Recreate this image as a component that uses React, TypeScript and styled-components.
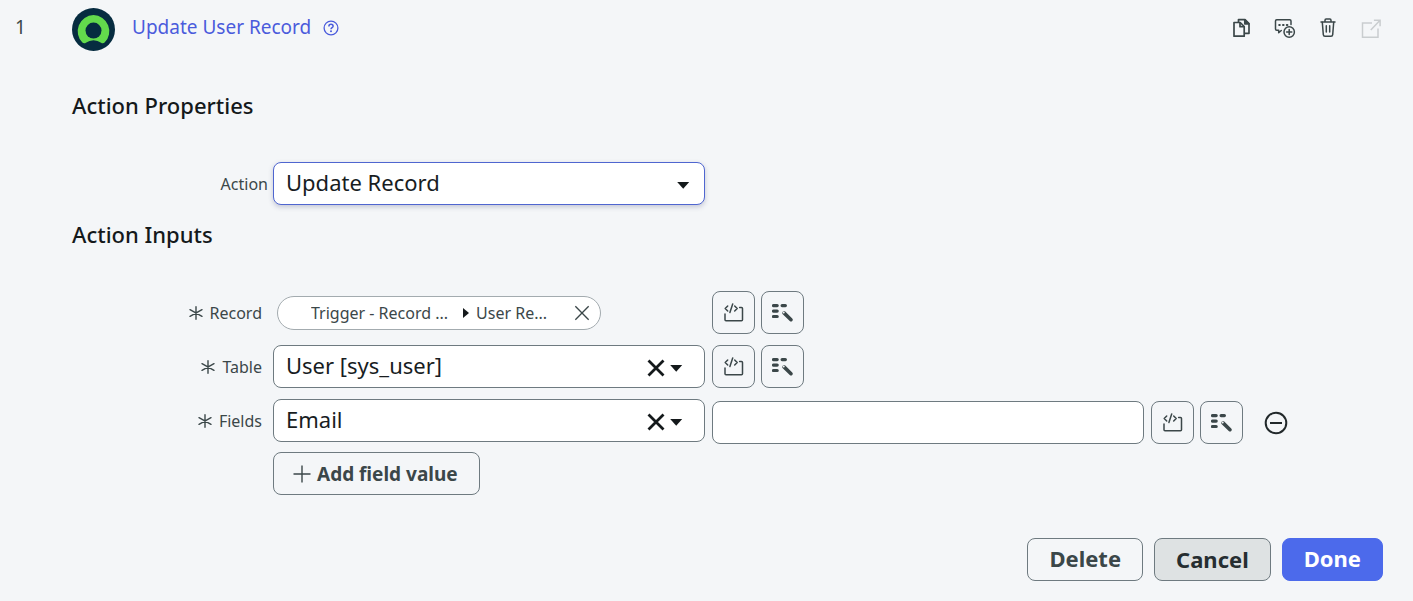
import React from 'react';
import styled, { createGlobalStyle, css } from 'styled-components';

const GlobalStyle = createGlobalStyle`
  *, *::before, *::after { box-sizing: border-box; }
  html, body { margin: 0; background: #f4f6f8; }
  body, button, select, input { font-family: 'Noto Sans', 'Open Sans', sans-serif; }
`;

const Page = styled.main`
  min-height: 100vh;
  padding: 8px 30px 20px 0;
  color: #3b4749;
  background: #f4f6f8;
`;

const Header = styled.header`
  display: flex;
  align-items: flex-start;
  height: 43px;
`;

const StepNumber = styled.span`
  flex: 0 0 72px;
  padding-left: 15px;
  font-size: 19px;
  line-height: 38px;
`;

const TitleLink = styled.a`
  margin-left: 17px;
  font-size: 19px;
  line-height: 38px;
  color: #4a5bdc;
  text-decoration: none;
`;

const GhostButton = styled.button`
  display: inline-flex;
  align-items: center;
  justify-content: center;
  padding: 0;
  border: 0;
  background: none;
  color: inherit;
  cursor: pointer;
`;

const HelpButton = styled(GhostButton)`
  margin-left: 12px;
  height: 40px;
  color: #4a5bdc;
`;

const Toolbar = styled.div`
  display: flex;
  gap: 19px;
  height: 40px;
  margin-left: auto;
`;

const ToolButton = styled(GhostButton)`
  width: 24px;
  &:disabled { color: #c9cdcf; cursor: default; }
`;

const SectionTitle = styled.h2`
  margin: 0 0 0 72px;
  font-size: 22px;
  font-weight: 500;
  line-height: 30px;
  color: #14191b;
`;

const Section = styled.section<{ $top: number; $bodyTop: number }>`
  padding-top: ${p => p.$top}px;
  ${SectionTitle} { margin-bottom: ${p => p.$bodyTop}px; }
`;

const Row = styled.div<{ $after?: number }>`
  display: flex;
  align-items: flex-start;
  margin-bottom: ${p => p.$after ?? 0}px;
`;

const Label = styled.label<{ $end: number }>`
  display: flex;
  flex: 0 0 273px;
  align-items: center;
  justify-content: flex-end;
  gap: 7px;
  height: 43px;
  padding-right: ${p => p.$end}px;
  font-size: 16px;
`;

const Slot = styled.div`
  position: relative;
  flex: 0 1 432px;
  min-width: 0;
  min-height: 43px;
`;

const box = css`
  height: 43px;
  border: 1px solid #6e7a80;
  border-radius: 8px;
`;

const Select = styled.select<{ $focused?: boolean }>`
  ${box}
  display: block;
  width: 100%;
  padding: 0 60px 3px 12px;
  appearance: none;
  background: #fff;
  font-size: 22px;
  color: #181d1f;
  outline: none;
  ${p => p.$focused && css`
    border-color: #4f66d0;
    box-shadow: 0 2px 5px rgba(50, 60, 110, 0.25);
  `}
`;

const Adornment = styled.span<{ $end: number }>`
  position: absolute;
  top: 0;
  right: ${p => p.$end}px;
  display: flex;
  align-items: center;
  gap: 5px;
  height: 45px;
  color: #14191b;
  pointer-events: none;
  button { pointer-events: auto; }
`;

const TextInput = styled.input`
  ${box}
  display: block;
  width: 100%;
  padding: 0 12px;
  background: #fff;
  font-size: 22px;
`;

const Tools = styled.div`
  display: flex;
  gap: 6px;
  margin-left: 7px;
`;

const IconButton = styled.button`
  ${box}
  display: flex;
  align-items: center;
  justify-content: center;
  width: 43px;
  padding: 0;
  background: transparent;
  color: #3b4749;
  cursor: pointer;
`;

const ValueGroup = styled.div`
  display: flex;
  flex: 0 1 auto;
  min-width: 0;
  width: 583px;
  padding-top: 2px;
  margin-left: 7px;
`;

const RemoveButton = styled(GhostButton)`
  height: 43px;
  margin-left: 21px;
  color: #22292b;
`;

const Pill = styled.div`
  display: flex;
  align-items: center;
  width: 75%;
  height: 34px;
  margin: 5px 4px 4px;
  padding: 0 10px 0 33px;
  border: 1px solid #a3abaf;
  border-radius: 17px;
  background: #fff;
  font-size: 16px;
  white-space: nowrap;
`;

const Crumb = styled.span`
  overflow: hidden;
  text-overflow: ellipsis;
`;

const PillArrow = styled.svg`
  flex: none;
  margin: 0 7px 0 15px;
  color: #14191b;
`;

const PillClear = styled(GhostButton)`
  margin-left: auto;
`;

const AddButton = styled.button`
  ${box}
  display: inline-flex;
  align-items: center;
  gap: 6px;
  margin-left: 273px;
  padding: 0 21px 0 19px;
  background: transparent;
  font-size: 19px;
  font-weight: 700;
  color: #3b4749;
  cursor: pointer;
`;

const Footer = styled.footer`
  display: flex;
  justify-content: flex-end;
  gap: 11px;
  margin-top: 43px;
`;

const FooterButton = styled.button<{ $kind: 'plain' | 'grey' | 'primary' }>`
  ${box}
  padding: 0 21px 3px;
  background: transparent;
  font-size: 22px;
  font-weight: 700;
  color: #3b4749;
  cursor: pointer;
  ${p => p.$kind === 'grey' && css`
    padding-bottom: 1px;
    background: #dee2e3;
    color: #262e31;
  `}
  ${p => p.$kind === 'primary' && css`
    border-color: #4c6aeb;
    background: #4c6aeb;
    color: #fff;
  `}
`;

const Logo = () => (
  <svg width="43" height="43" viewBox="0 0 43 43" aria-hidden="true">
    <circle cx="21.5" cy="21.5" r="21.5" fill="#062c40" />
    <path
      fill="#63da4c"
      d="M21.5 7A16.200 16.200 0 0 0 10.400 34.600c1 .9 2.400 1 3.500.2a12.700 12.700 0 0 1 15.200 0c1.100.8 2.500.7 3.500-.2A16.200 16.200 0 0 0 21.500 7z"
    />
    <circle cx="21.5" cy="22.6" r="8" fill="#062c40" />
  </svg>
);

const HelpIcon = () => (
  <svg width="16" height="16" viewBox="0 0 16 16" fill="none" stroke="currentColor" strokeWidth="1.3">
    <circle cx="8" cy="8" r="6.9" />
    <path d="M5.900 6.400c0-1.300.9-2.100 2.100-2.100s2.100.8 2.100 1.900c0 1.500-2.100 1.500-2.100 3.100" strokeWidth="1.5" />
    <circle cx="8" cy="11.2" r="1" fill="currentColor" stroke="none" />
  </svg>
);

const CopyIcon = () => (
  <svg width="18" height="20" viewBox="0 0 18 20" fill="none" stroke="currentColor" strokeWidth="1.7" strokeLinejoin="round">
    <path d="M1 4.500h6.200l4 4v9.700H1z" />
    <path d="M7 4.700v4h4" />
    <path d="M5.500 4.300V1.600H12l4 4v9.700h-4.600" />
    <path d="M11.800 1.800v4h4z" fill="currentColor" />
  </svg>
);

const CommentAddIcon = () => (
  <svg width="22" height="20" viewBox="0 0 22 20" fill="none" stroke="currentColor" strokeWidth="1.5" strokeLinecap="round" strokeLinejoin="round">
    <path d="M17 6.500V3c0-.7-.5-1.200-1.200-1.200H2.700c-.7 0-1.200.5-1.200 1.200v8c0 .7.5 1.200 1.200 1.200h2v2.600l2.600-2.300" />
    <path d="M5.200 7h.6M9 7h.6M12.800 7h.6" strokeWidth="2" />
    <circle cx="15.200" cy="14" r="5.200" />
    <path d="M15.200 11.400v5.200M12.600 14h5.200" />
  </svg>
);

const TrashIcon = () => (
  <svg width="16" height="20" viewBox="0 0 16 20" fill="none" stroke="currentColor" strokeWidth="1.5" strokeLinecap="round" strokeLinejoin="round">
    <path d="M1 4h14M5 3.800V2.200c0-.7.4-1.100 1.100-1.100h3.800c.7 0 1.100.4 1.100 1.100v1.600" />
    <path d="M2.300 4.200l1 12.400c.1 1 .7 1.600 1.700 1.600h6c1 0 1.600-.6 1.700-1.600l1-12.400M6.300 7.800v6.300M9.700 7.800v6.300" />
  </svg>
);

const OpenIcon = () => (
  <svg width="20" height="20" viewBox="0 0 20 20" fill="none" stroke="currentColor" strokeWidth="1.5">
    <path d="M11 5H1.500v14.200h15.500V10.500M9.800 12L18.600 2.700M12.900 2.200h6.200v6" />
  </svg>
);

const CodeIcon = () => (
  <svg width="20" height="20" viewBox="0 0 20 20" fill="none" stroke="currentColor" strokeWidth="1.5" strokeLinecap="round" strokeLinejoin="round">
    <path d="M1 11v5.800c0 .6.400 1 1 1h15.500c.6 0 1-.4 1-1V5.500c0-.6-.4-1-1-1H15.600" />
    <path d="M3.700 3L1.200 5.500l2.500 2.500M8.700 1L5.900 9.500M10.700 3l2.500 2.500-2.500 2.500" />
  </svg>
);

const PickerIcon = () => (
  <svg width="22" height="20" viewBox="0 0 22 20" fill="none" stroke="currentColor" strokeWidth="3.2" strokeLinecap="round">
    <path d="M1.500 2.600h3.700M10.100 2.600h3.300M1.500 8.100h3.700M1.500 13.500h3.700" />
    <path d="M12 9.900l7 6.800" strokeWidth="3.6" />
    <circle cx="11.700" cy="9.600" r="1" fill="#f4f6f8" stroke="none" />
  </svg>
);

const Asterisk = () => (
  <svg width="14" height="14" viewBox="0 0 14 14" stroke="currentColor" strokeWidth="1.4" strokeLinecap="round" aria-hidden="true">
    <path d="M7 .8v12.400M1 3.700l12 6.600M1 10.300l12-6.600" />
  </svg>
);

const Caret = () => (
  <svg width="13" height="8" viewBox="0 0 13 8" fill="currentColor" aria-hidden="true">
    <path d="M.2 1h12L6.200 7.700z" />
  </svg>
);

const Cross = ({ size, weight }: { size: number; weight: number }) => (
  <svg width={size} height={size} viewBox="0 0 18 18" stroke="currentColor" strokeWidth={weight}>
    <path d="M1.500 1.500l15 15M16.500 1.500l-15 15" />
  </svg>
);

function DataTools() {
  return (
    <Tools>
      <IconButton type="button" aria-label="Toggle scripting"><CodeIcon /></IconButton>
      <IconButton type="button" aria-label="Data pill picker"><PickerIcon /></IconButton>
    </Tools>
  );
}

function Dropdown({ id, value, clearable, focused }: { id: string; value: string; clearable?: boolean; focused?: boolean }) {
  return (
    <Slot>
      <Select id={id} defaultValue={value} $focused={focused}>
        <option>{value}</option>
      </Select>
      <Adornment $end={clearable ? 22 : 15}>
        {clearable && (
          <GhostButton type="button" aria-label="Clear"><Cross size={18} weight={2.8} /></GhostButton>
        )}
        <Caret />
      </Adornment>
    </Slot>
  );
}

export default function App() {
  return (
    <>
      <GlobalStyle />
      <Page>
        <Header>
          <StepNumber>1</StepNumber>
          <Logo />
          <TitleLink href="#">Update User Record</TitleLink>
          <HelpButton type="button" aria-label="Help"><HelpIcon /></HelpButton>
          <Toolbar>
            <ToolButton type="button" aria-label="Duplicate"><CopyIcon /></ToolButton>
            <ToolButton type="button" aria-label="Add comment"><CommentAddIcon /></ToolButton>
            <ToolButton type="button" aria-label="Delete step"><TrashIcon /></ToolButton>
            <ToolButton type="button" aria-label="Open" disabled><OpenIcon /></ToolButton>
          </Toolbar>
        </Header>

        <Section $top={39} $bodyTop={42}>
          <SectionTitle>Action Properties</SectionTitle>
          <Row>
            <Label htmlFor="action" $end={5}>Action</Label>
            <Dropdown id="action" value="Update Record" focused />
          </Row>
        </Section>

        <Section $top={14} $bodyTop={42}>
          <SectionTitle>Action Inputs</SectionTitle>
          <Row $after={11}>
            <Label htmlFor="record" $end={11}><Asterisk />Record</Label>
            <Slot>
              <Pill>
                <Crumb>Trigger - Record ...</Crumb>
                <PillArrow width="6" height="10" viewBox="0 0 6 10" fill="currentColor"><path d="M0 0l6 5-6 5z" /></PillArrow>
                <Crumb>User Re...</Crumb>
                <PillClear id="record" type="button" aria-label="Remove record"><Cross size={16} weight={1.5} /></PillClear>
              </Pill>
            </Slot>
            <DataTools />
          </Row>
          <Row $after={11}>
            <Label htmlFor="table" $end={11}><Asterisk />Table</Label>
            <Dropdown id="table" value="User [sys_user]" clearable />
            <DataTools />
          </Row>
          <Row $after={8}>
            <Label htmlFor="field" $end={11}><Asterisk />Fields</Label>
            <Dropdown id="field" value="Email" clearable />
            <ValueGroup>
              <Slot><TextInput type="text" aria-label="Email value" /></Slot>
              <DataTools />
              <RemoveButton type="button" aria-label="Remove field">
                <svg width="24" height="24" viewBox="0 0 24 24" fill="none" stroke="currentColor" strokeWidth="2">
                  <circle cx="12" cy="12" r="10.3" />
                  <path d="M6 12h12" />
                </svg>
              </RemoveButton>
            </ValueGroup>
          </Row>
          <AddButton type="button">
            <svg width="18" height="18" viewBox="0 0 18 18" stroke="currentColor" strokeWidth="1.4" aria-hidden="true">
              <path d="M9 .5v17M.5 9h17" />
            </svg>
            Add field value
          </AddButton>
        </Section>

        <Footer>
          <FooterButton type="button" $kind="plain">Delete</FooterButton>
          <FooterButton type="button" $kind="grey">Cancel</FooterButton>
          <FooterButton type="button" $kind="primary">Done</FooterButton>
        </Footer>
      </Page>
    </>
  );
}
